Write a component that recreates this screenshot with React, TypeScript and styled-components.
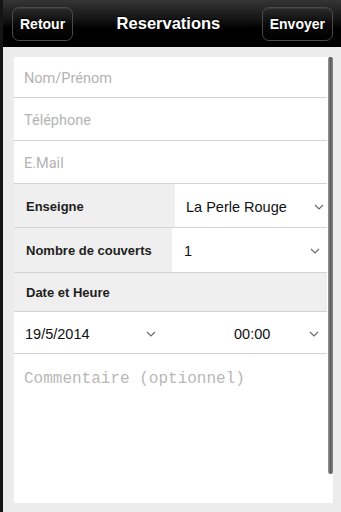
import styled, { createGlobalStyle } from "styled-components";

const GlobalStyle = createGlobalStyle`
  html, body {
    margin: 0;
    padding: 0;
    background: #ececec;
  }
  * {
    box-sizing: border-box;
  }
`;

const Page = styled.div`
  width: 341px;
  height: 512px;
  display: flex;
  flex-direction: column;
  border-left: 3px solid #151515;
  font-family: "Liberation Sans", Arial, sans-serif;
  overflow: hidden;
`;

const Header = styled.header`
  height: 47px;
  flex: none;
  display: flex;
  align-items: center;
  justify-content: space-between;
  padding: 0 8px 0 9px;
  background: linear-gradient(#353535 0%, #111 45%, #000 60%);
`;

const HeaderButton = styled.button`
  height: 34px;
  padding: 0 7px;
  border: 1px solid #4a4a4a;
  border-radius: 7px;
  background: linear-gradient(#2a2a2a 0%, #080808 55%, #000 100%);
  color: #fff;
  font-family: "Liberation Sans", Arial, sans-serif;
  font-weight: bold;
  font-size: 14px;
  text-shadow: 0 -1px 1px #000;
  box-shadow: inset 0 1px 0 rgba(255, 255, 255, 0.08);
`;

const Title = styled.h1`
  margin: 0 0 0 2px;
  color: #fff;
  font-size: 16.5px;
  font-weight: bold;
  text-shadow: 0 -1px 1px #000;
`;

const Main = styled.main`
  flex: 1;
  display: flex;
  padding: 10px 8px 9px 11px;
`;

const Card = styled.div`
  flex: 1;
  display: flex;
  background: #fff;
`;

const Form = styled.div`
  flex: 1;
  display: flex;
  flex-direction: column;
`;

const ScrollTrack = styled.div`
  width: 6px;
  flex: none;
  display: flex;
  justify-content: center;
`;

const ScrollThumb = styled.div`
  width: 5px;
  height: 417px;
  border-radius: 2px 2px 3px 3px;
  background: linear-gradient(90deg, #9a9a9a, #5c5c5c 50%, #8a8a8a);
`;

const Row = styled.div<{ $h: number; $shade?: boolean }>`
  height: ${(p) => p.$h}px;
  flex: none;
  display: flex;
  align-items: center;
  border-bottom: 1px solid #d3d3d3;
  background: ${(p) => (p.$shade ? "#efefef" : "#fff")};
`;

const Placeholder = styled.span`
  padding: 2px 0 0 10px;
  color: #b3b3b3;
  font-family: Roboto, "Liberation Sans", sans-serif;
  font-size: 14.5px;
`;

const Label = styled.div<{ $w?: number }>`
  width: ${(p) => (p.$w ? `${p.$w}px` : "auto")};
  align-self: stretch;
  display: flex;
  align-items: center;
  padding: 1px 0 0 12px;
  background: #efefef;
  color: #1e1e1e;
  font-size: 13px;
  font-weight: bold;
`;

const Select = styled.div<{ $w?: number; $pl: number; $pr: number }>`
  ${(p) => (p.$w ? `width: ${p.$w}px; flex: none;` : "flex: 1;")}
  align-self: stretch;
  display: flex;
  align-items: center;
  justify-content: space-between;
  padding: 2px ${(p) => p.$pr}px 0 ${(p) => p.$pl}px;
  color: #111;
  font-family: "Liberation Sans", Arial, sans-serif;
  font-size: 14.5px;
`;

const Comment = styled.div`
  flex: 1;
  padding: 16px 10px;
  color: #b8b8b8;
  font-family: "Liberation Mono", "Courier New", monospace;
  font-size: 16px;
`;

function Chevron() {
  return (
    <svg width="10" height="6" viewBox="0 0 10 6">
      <polyline
        points="1,1 5,5 9,1"
        fill="none"
        stroke="#6a6a6a"
        strokeWidth="1.2"
      />
    </svg>
  );
}

export default function App() {
  return (
    <>
      <GlobalStyle />
      <Page>
        <Header>
          <HeaderButton>Retour</HeaderButton>
          <Title>Reservations</Title>
          <HeaderButton>Envoyer</HeaderButton>
        </Header>
        <Main>
          <Card>
            <Form>
              <Row $h={41}>
                <Placeholder>Nom/Prénom</Placeholder>
              </Row>
              <Row $h={43}>
                <Placeholder>Téléphone</Placeholder>
              </Row>
              <Row $h={43}>
                <Placeholder>E.Mail</Placeholder>
              </Row>
              <Row $h={44}>
                <Label $w={161}>Enseigne</Label>
                <Select $pl={11} $pr={3}>
                  La Perle Rouge
                  <Chevron />
                </Select>
              </Row>
              <Row $h={45}>
                <Label $w={158}>Nombre de couverts</Label>
                <Select $pl={12} $pr={7}>
                  1
                  <Chevron />
                </Select>
              </Row>
              <Row $h={39} $shade>
                <Label>Date et Heure</Label>
              </Row>
              <Row $h={42}>
                <Select $w={156} $pl={11} $pr={14}>
                  19/5/2014
                  <Chevron />
                </Select>
                <Select $pl={64} $pr={8}>
                  00:00
                  <Chevron />
                </Select>
              </Row>
              <Comment>Commentaire (optionnel)</Comment>
            </Form>
            <ScrollTrack>
              <ScrollThumb />
            </ScrollTrack>
          </Card>
        </Main>
      </Page>
    </>
  );
}
